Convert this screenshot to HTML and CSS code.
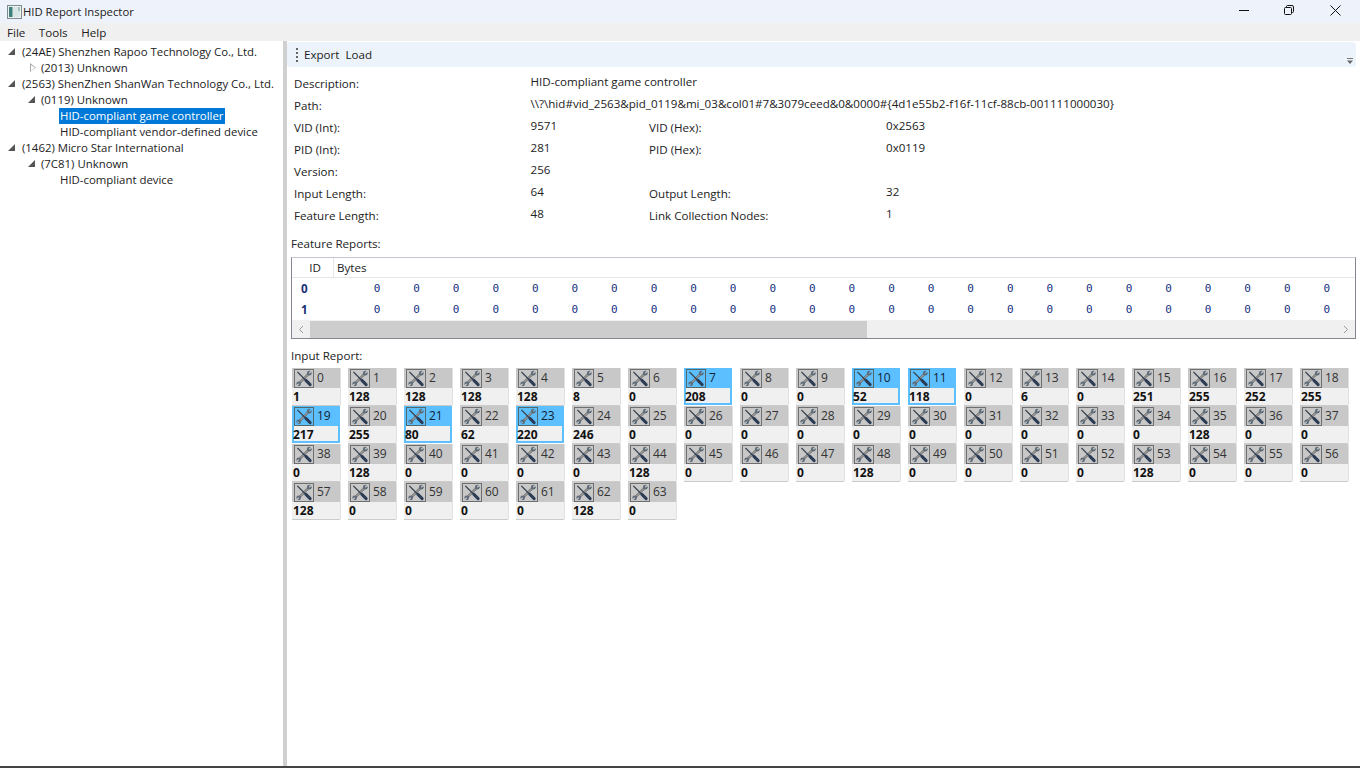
FILE: index.html
```html
<!DOCTYPE html>
<html lang="en">
<head>
<meta charset="utf-8">
<title>HID Report Inspector</title>
<link rel="stylesheet" href="styles.css">
</head>
<body>
<svg class="defs" width="0" height="0" aria-hidden="true">
  <symbol id="tools" viewBox="0 0 18 18">
    <path d="M4 14L14 4" stroke="#555" stroke-width="2.400" fill="none"/>
    <path d="M4 14L14 4" stroke="#e4e4e4" stroke-width=".9" fill="none"/>
    <circle cx="3.400" cy="14.600" r="2.500" fill="#5f6b76"/>
    <circle cx="14.600" cy="3.400" r="2.500" fill="#5f6b76"/>
    <path d="M1.200 16.800L3.400 14.600M16.800 1.200L14.600 3.400" stroke="currentColor" stroke-width="1.300" fill="none"/>
    <path d="M2 2L10.500 10.500" stroke="#36424e" stroke-width="1.400" fill="none"/>
    <path d="M11 11l4.500 4.500" stroke="#2b3c55" stroke-width="3.200" stroke-linecap="round" fill="none"/>
  </symbol>
</svg>
<div class="window">
  <header class="titlebar">
    <svg class="appicon" width="16" height="16" viewBox="0 0 16 16"><rect x=".5" y="1.500" width="14" height="13" fill="#eef1f1" stroke="#7d8c8c"/><rect x="2" y="3" width="3.500" height="10" fill="#3d7f7a"/><rect x="6" y="3" width="7" height="10" fill="#d8e6e5"/><rect x="11" y="3" width="2" height="4" fill="#9cc0bd"/></svg>
    <span class="apptitle">HID Report Inspector</span>
    <div class="winbtns">
      <svg width="46" height="23" viewBox="0 0 46 23"><path d="M17 10.500h10" stroke="#111" fill="none"/></svg>
      <svg width="46" height="23" viewBox="0 0 46 23"><path d="M16.500 8.500a1 1 0 0 1 1-1h5a1 1 0 0 1 1 1v5a1 1 0 0 1-1 1h-5a1 1 0 0 1-1-1zM18.500 7.500v-1a1 1 0 0 1 1-1h4.500a1.500 1.500 0 0 1 1.500 1.500v4.500a1 1 0 0 1-1 1h-1" stroke="#111" fill="none"/></svg>
      <svg width="46" height="23" viewBox="0 0 46 23"><path d="M16.500 5.500l10 10M26.500 5.500l-10 10" stroke="#111" fill="none"/></svg>
    </div>
  </header>
  <nav class="menubar">
    <span>File</span><span>Tools</span><span>Help</span>
  </nav>
  <div class="panes">
    <aside class="tree">
      <div class="node lvl0"><i class="arrow open"></i>(24AE) Shenzhen Rapoo Technology Co., Ltd.</div>
      <div class="node lvl1"><i class="arrow closed"></i>(2013) Unknown</div>
      <div class="node lvl0"><i class="arrow open"></i>(2563) ShenZhen ShanWan Technology Co., Ltd.</div>
      <div class="node lvl1"><i class="arrow open"></i>(0119) Unknown</div>
      <div class="node lvl2"><span class="selected">HID-compliant game controller</span></div>
      <div class="node lvl2">HID-compliant vendor-defined device</div>
      <div class="node lvl0"><i class="arrow open"></i>(1462) Micro Star International</div>
      <div class="node lvl1"><i class="arrow open"></i>(7C81) Unknown</div>
      <div class="node lvl2">HID-compliant device</div>
    </aside>
    <main class="content">
      <div class="toolbar">
        <i class="grip"></i><span class="tool">Export</span><span class="tool">Load</span>
        <svg class="overflow" width="8" height="8" viewBox="0 0 8 8"><path d="M1 1.500h6" stroke="#777"/><path d="M1 3.500h6L4 7z" fill="#666"/></svg>
      </div>
      <section class="info">
        <div class="lbl">Description:</div><div class="val wide">HID-compliant game controller</div>
        <div class="lbl">Path:</div><div class="val wide">\\?\hid#vid_2563&amp;pid_0119&amp;mi_03&amp;col01#7&amp;3079ceed&amp;0&amp;0000#{4d1e55b2-f16f-11cf-88cb-001111000030}</div>
        <div class="lbl">VID (Int):</div><div class="val">9571</div><div class="lbl">VID (Hex):</div><div class="val">0x2563</div>
        <div class="lbl">PID (Int):</div><div class="val">281</div><div class="lbl">PID (Hex):</div><div class="val">0x0119</div>
        <div class="lbl">Version:</div><div class="val wide">256</div>
        <div class="lbl">Input Length:</div><div class="val">64</div><div class="lbl">Output Length:</div><div class="val">32</div>
        <div class="lbl">Feature Length:</div><div class="val">48</div><div class="lbl">Link Collection Nodes:</div><div class="val">1</div>
      </section>
      <div class="caption">Feature Reports:</div>
      <div class="datagrid">
        <div class="dg-head"><span class="h-id">ID</span><span class="h-bytes">Bytes</span></div>
        <div class="dg-row"><b>0</b><div class="zeros"><span>0</span><span>0</span><span>0</span><span>0</span><span>0</span><span>0</span><span>0</span><span>0</span><span>0</span><span>0</span><span>0</span><span>0</span><span>0</span><span>0</span><span>0</span><span>0</span><span>0</span><span>0</span><span>0</span><span>0</span><span>0</span><span>0</span><span>0</span><span>0</span><span>0</span></div></div>
        <div class="dg-row"><b>1</b><div class="zeros"><span>0</span><span>0</span><span>0</span><span>0</span><span>0</span><span>0</span><span>0</span><span>0</span><span>0</span><span>0</span><span>0</span><span>0</span><span>0</span><span>0</span><span>0</span><span>0</span><span>0</span><span>0</span><span>0</span><span>0</span><span>0</span><span>0</span><span>0</span><span>0</span><span>0</span></div></div>
        <div class="hscroll">
          <svg width="19" height="17" viewBox="0 0 19 17"><path d="M11 5l-3.500 3.500L11 12" stroke="#999" fill="none"/></svg>
          <div class="track"><div class="thumb"></div></div>
          <svg width="19" height="17" viewBox="0 0 19 17"><path d="M8 5l3.500 3.500L8 12" stroke="#999" fill="none"/></svg>
        </div>
      </div>
      <div class="caption input-cap">Input Report:</div>
      <div class="cells">
        <div class="cell"><div class="cell-h"><svg class="ico"><use href="#tools"/></svg><span>0</span></div><div class="cell-v">1</div></div>
        <div class="cell"><div class="cell-h"><svg class="ico"><use href="#tools"/></svg><span>1</span></div><div class="cell-v">128</div></div>
        <div class="cell"><div class="cell-h"><svg class="ico"><use href="#tools"/></svg><span>2</span></div><div class="cell-v">128</div></div>
        <div class="cell"><div class="cell-h"><svg class="ico"><use href="#tools"/></svg><span>3</span></div><div class="cell-v">128</div></div>
        <div class="cell"><div class="cell-h"><svg class="ico"><use href="#tools"/></svg><span>4</span></div><div class="cell-v">128</div></div>
        <div class="cell"><div class="cell-h"><svg class="ico"><use href="#tools"/></svg><span>5</span></div><div class="cell-v">8</div></div>
        <div class="cell"><div class="cell-h"><svg class="ico"><use href="#tools"/></svg><span>6</span></div><div class="cell-v">0</div></div>
        <div class="cell on"><div class="cell-h"><svg class="ico"><use href="#tools"/></svg><span>7</span></div><div class="cell-v">208</div></div>
        <div class="cell"><div class="cell-h"><svg class="ico"><use href="#tools"/></svg><span>8</span></div><div class="cell-v">0</div></div>
        <div class="cell"><div class="cell-h"><svg class="ico"><use href="#tools"/></svg><span>9</span></div><div class="cell-v">0</div></div>
        <div class="cell on"><div class="cell-h"><svg class="ico"><use href="#tools"/></svg><span>10</span></div><div class="cell-v">52</div></div>
        <div class="cell on"><div class="cell-h"><svg class="ico"><use href="#tools"/></svg><span>11</span></div><div class="cell-v">118</div></div>
        <div class="cell"><div class="cell-h"><svg class="ico"><use href="#tools"/></svg><span>12</span></div><div class="cell-v">0</div></div>
        <div class="cell"><div class="cell-h"><svg class="ico"><use href="#tools"/></svg><span>13</span></div><div class="cell-v">6</div></div>
        <div class="cell"><div class="cell-h"><svg class="ico"><use href="#tools"/></svg><span>14</span></div><div class="cell-v">0</div></div>
        <div class="cell"><div class="cell-h"><svg class="ico"><use href="#tools"/></svg><span>15</span></div><div class="cell-v">251</div></div>
        <div class="cell"><div class="cell-h"><svg class="ico"><use href="#tools"/></svg><span>16</span></div><div class="cell-v">255</div></div>
        <div class="cell"><div class="cell-h"><svg class="ico"><use href="#tools"/></svg><span>17</span></div><div class="cell-v">252</div></div>
        <div class="cell"><div class="cell-h"><svg class="ico"><use href="#tools"/></svg><span>18</span></div><div class="cell-v">255</div></div>
        <div class="cell on"><div class="cell-h"><svg class="ico"><use href="#tools"/></svg><span>19</span></div><div class="cell-v">217</div></div>
        <div class="cell"><div class="cell-h"><svg class="ico"><use href="#tools"/></svg><span>20</span></div><div class="cell-v">255</div></div>
        <div class="cell on"><div class="cell-h"><svg class="ico"><use href="#tools"/></svg><span>21</span></div><div class="cell-v">80</div></div>
        <div class="cell"><div class="cell-h"><svg class="ico"><use href="#tools"/></svg><span>22</span></div><div class="cell-v">62</div></div>
        <div class="cell on"><div class="cell-h"><svg class="ico"><use href="#tools"/></svg><span>23</span></div><div class="cell-v">220</div></div>
        <div class="cell"><div class="cell-h"><svg class="ico"><use href="#tools"/></svg><span>24</span></div><div class="cell-v">246</div></div>
        <div class="cell"><div class="cell-h"><svg class="ico"><use href="#tools"/></svg><span>25</span></div><div class="cell-v">0</div></div>
        <div class="cell"><div class="cell-h"><svg class="ico"><use href="#tools"/></svg><span>26</span></div><div class="cell-v">0</div></div>
        <div class="cell"><div class="cell-h"><svg class="ico"><use href="#tools"/></svg><span>27</span></div><div class="cell-v">0</div></div>
        <div class="cell"><div class="cell-h"><svg class="ico"><use href="#tools"/></svg><span>28</span></div><div class="cell-v">0</div></div>
        <div class="cell"><div class="cell-h"><svg class="ico"><use href="#tools"/></svg><span>29</span></div><div class="cell-v">0</div></div>
        <div class="cell"><div class="cell-h"><svg class="ico"><use href="#tools"/></svg><span>30</span></div><div class="cell-v">0</div></div>
        <div class="cell"><div class="cell-h"><svg class="ico"><use href="#tools"/></svg><span>31</span></div><div class="cell-v">0</div></div>
        <div class="cell"><div class="cell-h"><svg class="ico"><use href="#tools"/></svg><span>32</span></div><div class="cell-v">0</div></div>
        <div class="cell"><div class="cell-h"><svg class="ico"><use href="#tools"/></svg><span>33</span></div><div class="cell-v">0</div></div>
        <div class="cell"><div class="cell-h"><svg class="ico"><use href="#tools"/></svg><span>34</span></div><div class="cell-v">0</div></div>
        <div class="cell"><div class="cell-h"><svg class="ico"><use href="#tools"/></svg><span>35</span></div><div class="cell-v">128</div></div>
        <div class="cell"><div class="cell-h"><svg class="ico"><use href="#tools"/></svg><span>36</span></div><div class="cell-v">0</div></div>
        <div class="cell"><div class="cell-h"><svg class="ico"><use href="#tools"/></svg><span>37</span></div><div class="cell-v">0</div></div>
        <div class="cell"><div class="cell-h"><svg class="ico"><use href="#tools"/></svg><span>38</span></div><div class="cell-v">0</div></div>
        <div class="cell"><div class="cell-h"><svg class="ico"><use href="#tools"/></svg><span>39</span></div><div class="cell-v">128</div></div>
        <div class="cell"><div class="cell-h"><svg class="ico"><use href="#tools"/></svg><span>40</span></div><div class="cell-v">0</div></div>
        <div class="cell"><div class="cell-h"><svg class="ico"><use href="#tools"/></svg><span>41</span></div><div class="cell-v">0</div></div>
        <div class="cell"><div class="cell-h"><svg class="ico"><use href="#tools"/></svg><span>42</span></div><div class="cell-v">0</div></div>
        <div class="cell"><div class="cell-h"><svg class="ico"><use href="#tools"/></svg><span>43</span></div><div class="cell-v">0</div></div>
        <div class="cell"><div class="cell-h"><svg class="ico"><use href="#tools"/></svg><span>44</span></div><div class="cell-v">128</div></div>
        <div class="cell"><div class="cell-h"><svg class="ico"><use href="#tools"/></svg><span>45</span></div><div class="cell-v">0</div></div>
        <div class="cell"><div class="cell-h"><svg class="ico"><use href="#tools"/></svg><span>46</span></div><div class="cell-v">0</div></div>
        <div class="cell"><div class="cell-h"><svg class="ico"><use href="#tools"/></svg><span>47</span></div><div class="cell-v">0</div></div>
        <div class="cell"><div class="cell-h"><svg class="ico"><use href="#tools"/></svg><span>48</span></div><div class="cell-v">128</div></div>
        <div class="cell"><div class="cell-h"><svg class="ico"><use href="#tools"/></svg><span>49</span></div><div class="cell-v">0</div></div>
        <div class="cell"><div class="cell-h"><svg class="ico"><use href="#tools"/></svg><span>50</span></div><div class="cell-v">0</div></div>
        <div class="cell"><div class="cell-h"><svg class="ico"><use href="#tools"/></svg><span>51</span></div><div class="cell-v">0</div></div>
        <div class="cell"><div class="cell-h"><svg class="ico"><use href="#tools"/></svg><span>52</span></div><div class="cell-v">0</div></div>
        <div class="cell"><div class="cell-h"><svg class="ico"><use href="#tools"/></svg><span>53</span></div><div class="cell-v">128</div></div>
        <div class="cell"><div class="cell-h"><svg class="ico"><use href="#tools"/></svg><span>54</span></div><div class="cell-v">0</div></div>
        <div class="cell"><div class="cell-h"><svg class="ico"><use href="#tools"/></svg><span>55</span></div><div class="cell-v">0</div></div>
        <div class="cell"><div class="cell-h"><svg class="ico"><use href="#tools"/></svg><span>56</span></div><div class="cell-v">0</div></div>
        <div class="cell"><div class="cell-h"><svg class="ico"><use href="#tools"/></svg><span>57</span></div><div class="cell-v">128</div></div>
        <div class="cell"><div class="cell-h"><svg class="ico"><use href="#tools"/></svg><span>58</span></div><div class="cell-v">0</div></div>
        <div class="cell"><div class="cell-h"><svg class="ico"><use href="#tools"/></svg><span>59</span></div><div class="cell-v">0</div></div>
        <div class="cell"><div class="cell-h"><svg class="ico"><use href="#tools"/></svg><span>60</span></div><div class="cell-v">0</div></div>
        <div class="cell"><div class="cell-h"><svg class="ico"><use href="#tools"/></svg><span>61</span></div><div class="cell-v">0</div></div>
        <div class="cell"><div class="cell-h"><svg class="ico"><use href="#tools"/></svg><span>62</span></div><div class="cell-v">128</div></div>
        <div class="cell"><div class="cell-h"><svg class="ico"><use href="#tools"/></svg><span>63</span></div><div class="cell-v">0</div></div>
      </div>
    </main>
  </div>
</div>
</body>
</html>
```
FILE: styles.css
```css
* { box-sizing: border-box; }
html, body { margin: 0; padding: 0; height: 100%; overflow: hidden; background: #fff; }
body { font: 11.6px/16px "Open Sans", "Noto Sans", sans-serif; color: #222; }
.defs { display: block; height: 0; }
.window { height: 768px; display: flex; flex-direction: column; border-bottom: 2px solid #444; }
.titlebar { height: 23px; flex: none; display: flex; align-items: center; background: #eef2fa; padding-left: 7px; }
.appicon { flex: none; }
.apptitle { font-size: 11.3px; color: #1a1a1a; }
.winbtns { margin-left: auto; display: flex; }
.winbtns svg { display: block; }
.menubar { height: 18px; flex: none; display: flex; gap: 13.500px; padding-left: 7px; background: #f0f0f0; line-height: 19px; color: #222; }
.panes { flex: 1; display: flex; min-height: 0; }
.tree { width: 287px; flex: none; padding-top: 3px; border-right: 4px solid #d0d0d0; white-space: nowrap; font-size: 11.4px; }
.node { height: 16px; position: relative; }
.lvl0 { padding-left: 22px; }
.lvl1 { padding-left: 41px; }
.lvl2 { padding-left: 60px; }
.arrow { position: absolute; top: 4px; width: 0; height: 0; }
.lvl0 .arrow { left: 8px; }
.lvl1 .arrow { left: 28px; }
.arrow.open { border-bottom: 7px solid #555; border-left: 7px solid transparent; }
.arrow.closed { top: 3px; left: 30px; width: 6px; height: 9px; background: #a8a8a8; clip-path: polygon(0 0, 100% 50%, 0 100%, 0 0, 1px 2px, 1px 8px, 5px 50%, 1px 2px); }
.selected { display: inline-block; background: #0078d7; color: #fff; height: 16px; margin-left: -1px; padding: 0 1px; }
.content { flex: 1; min-width: 0; padding: 1px 4px 0 0; }
.toolbar { height: 25px; display: flex; align-items: center; background: #ecf3fb; border-radius: 3px; position: relative; padding-left: 9px; gap: 6px; }
.grip { width: 2px; height: 14px; background: repeating-linear-gradient(#666 0 2px, transparent 2px 4px); }
.tool { color: #222; }
.overflow { position: absolute; right: 2px; bottom: 2px; }
.info { display: grid; grid-template-columns: 236.500px 118.500px 237px 1fr; grid-auto-rows: 22px; padding: 8px 0 0 7px; }
.lbl { padding-top: 1px; }
.val { margin-top: -1px; }
.wide { grid-column: 2 / -1; }
.caption { padding-left: 4px; margin-top: 7px; height: 16px; }
.datagrid { margin: 5px 0 0 4px; height: 82px; border: 1px solid #828790; border-top-color: #c4c8ce; display: flex; flex-direction: column; overflow: hidden; }
.dg-head { height: 20px; flex: none; display: flex; border-bottom: 1px solid #e6e6e6; line-height: 19px; }
.h-id { width: 42px; text-align: right; padding-right: 12px; border-right: 1px solid #e6e6e6; }
.h-bytes { padding-left: 3px; }
.dg-row { height: 21px; flex: none; display: flex; align-items: center; }
.dg-row b { width: 30px; padding-left: 9px; color: #1a2f78; font-weight: 700; }
.zeros { display: flex; padding-left: 66px; font: 11px/16px "DejaVu Sans Mono", monospace; color: #14307f; }
.zeros span { width: 39.580px; flex: none; }
.hscroll { height: 18px; flex: none; display: flex; align-items: center; background: #f0f0f0; }
.hscroll svg { flex: none; display: block; }
.track { flex: 1; height: 17px; margin-left: -1px; }
.thumb { width: 557px; height: 100%; background: #cdcdcd; }
.input-cap { margin-top: 9px; }
.cells { display: grid; grid-template-columns: repeat(19, 48px); column-gap: 8px; grid-auto-rows: 37px; row-gap: 1px; padding: 4px 0 0 5px; }
.cell { display: flex; flex-direction: column; background: #f0f0f0; box-shadow: 0 1px 0 #ccc, 1px 0 0 #e0e0e0; }
.cell-h { height: 20px; flex: none; display: flex; align-items: center; gap: 3px; background: #c8c8c8; color: #333; font-size: 12px; }
.cell-h span { line-height: 20px; }
.ico { width: 20px; height: 19px; margin: 1px 0 0 2px; padding: 0; border: 1px solid #6e6e6e; flex: none; display: block; color: #c8c8c8; }
.cell-v { height: 17px; line-height: 17px; padding-left: 1px; font-size: 12px; font-weight: 700; color: #111; }
.cell.on { box-shadow: inset 0 0 0 2px #5cbfff; }
.cell.on .cell-h { background: #5cbfff; color: #123; }
.cell.on .ico { border-color: #566; color: #5cbfff; }
```
